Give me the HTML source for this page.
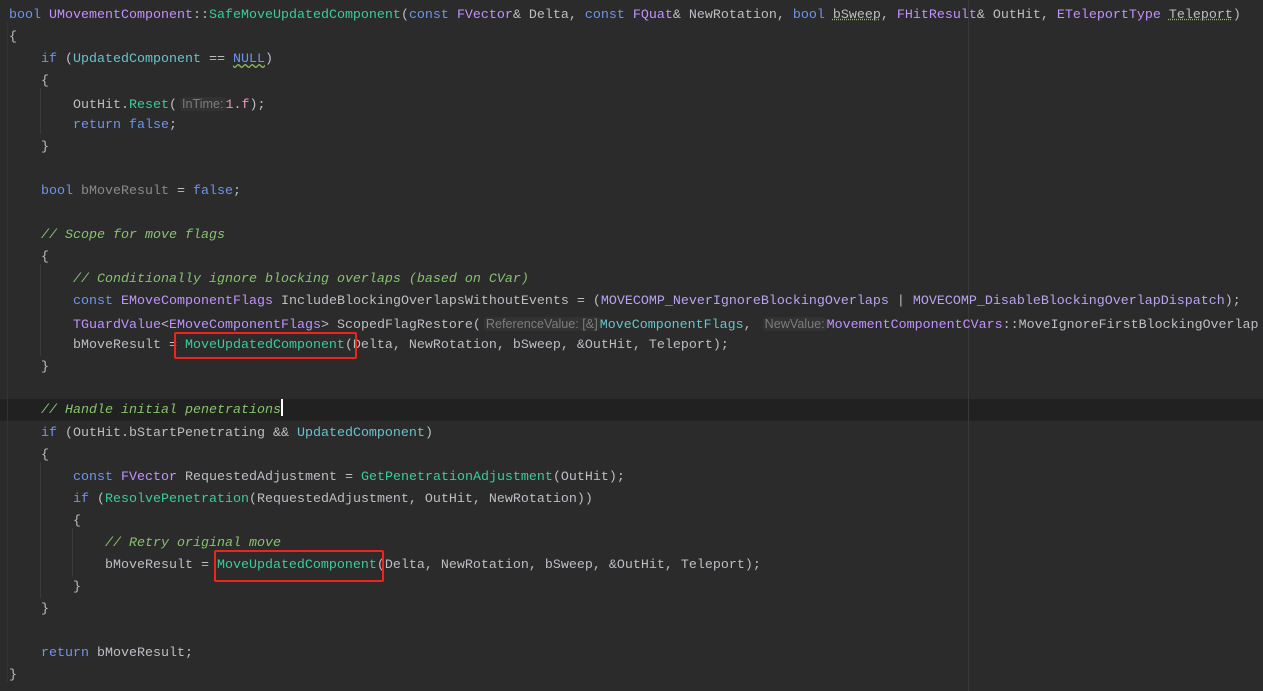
<!DOCTYPE html>
<html><head><meta charset="utf-8"><style>
body{margin:0;width:1263px;height:691px;background:#2b2b2b;overflow:hidden;position:relative;font-family:"Liberation Mono",monospace;font-size:13.33px;color:#bdbec4}
.l{position:absolute;left:9px;height:22px;line-height:22px;white-space:pre;margin-top:2px}
.k{color:#6c95eb}.t{color:#c191ff}.f{color:#39cc9b}.v{color:#66c3cc}.c{color:#85c46c;font-style:italic}.n{color:#ed94c0}.m{color:#b9a3f0}
.h{font-family:"Liberation Sans",sans-serif;font-size:12.6px;color:#7d7d7d;background:#323232;padding:0 2px;margin-left:3px;border-radius:3px}
.g{position:absolute;width:1px;background:#3b3b3b}
.box{position:absolute;border:2px solid #f0241c;border-radius:2px}
.u{text-decoration:underline dotted #8bbf5c}
.w{text-decoration:underline wavy #8bbf5c}
</style></head><body>
<div style="position:absolute;left:0;top:399px;width:1263px;height:22px;background:#212121"></div>
<div class="g" style="left:968px;top:0;height:691px;background:#393939"></div>
<div class="g" style="left:40px;top:88px;height:46px"></div>
<div class="g" style="left:40px;top:264px;height:92px"></div>
<div class="g" style="left:40px;top:462px;height:136px"></div>
<div class="g" style="left:72px;top:528px;height:48px"></div>
<div class="g" style="left:7px;top:22px;height:660px;background:#333"></div>
<div class="l" style="top:3px"><span class="k">bool</span> <span class="t">UMovementComponent</span>::<span class="f">SafeMoveUpdatedComponent</span>(<span class="k">const</span> <span class="t">FVector</span>&amp; Delta, <span class="k">const</span> <span class="t">FQuat</span>&amp; NewRotation, <span class="k">bool</span> <span class="u">bSweep</span>, <span class="t">FHitResult</span>&amp; OutHit, <span class="t">ETeleportType</span> <span class="u">Teleport</span>)</div>
<div class="l" style="top:25px">{</div>
<div class="l" style="top:47px">    <span class="k">if</span> (<span class="v">UpdatedComponent</span> == <span class="k w">NULL</span>)</div>
<div class="l" style="top:69px">    {</div>
<div class="l" style="top:91px">        OutHit.<span class="f">Reset</span>(<span class="h">InTime:</span><span class="n">1.f</span>);</div>
<div class="l" style="top:113px">        <span class="k">return false</span>;</div>
<div class="l" style="top:135px">    }</div>
<div class="l" style="top:179px">    <span class="k">bool</span> <span style="color:#8a8a8a">bMoveResult</span> = <span class="k">false</span>;</div>
<div class="l" style="top:223px">    <span class="c">// Scope for move flags</span></div>
<div class="l" style="top:245px">    {</div>
<div class="l" style="top:267px">        <span class="c">// Conditionally ignore blocking overlaps (based on CVar)</span></div>
<div class="l" style="top:289px">        <span class="k">const</span> <span class="t">EMoveComponentFlags</span> IncludeBlockingOverlapsWithoutEvents = (<span class="m">MOVECOMP_NeverIgnoreBlockingOverlaps</span> | <span class="m">MOVECOMP_DisableBlockingOverlapDispatch</span>);</div>
<div class="l" style="top:311px">        <span class="t">TGuardValue</span>&lt;<span class="t">EMoveComponentFlags</span>&gt; ScopedFlagRestore(<span class="h">ReferenceValue: [&amp;]</span><span class="v">MoveComponentFlags</span>, <span class="h">NewValue:</span><span class="t">MovementComponentCVars</span>::MoveIgnoreFirstBlockingOverlap</div>
<div class="l" style="top:333px">        bMoveResult = <span class="f">MoveUpdatedComponent</span>(Delta, NewRotation, bSweep, &amp;OutHit, Teleport);</div>
<div class="l" style="top:355px">    }</div>
<div class="l" style="top:397px">    <span class="c">// Handle initial penetrations</span><span style="display:inline-block;width:2px;height:17px;background:#fff;vertical-align:-3px"></span></div>
<div class="l" style="top:421px">    <span class="k">if</span> (OutHit.bStartPenetrating &amp;&amp; <span class="v">UpdatedComponent</span>)</div>
<div class="l" style="top:443px">    {</div>
<div class="l" style="top:465px">        <span class="k">const</span> <span class="t">FVector</span> RequestedAdjustment = <span class="f">GetPenetrationAdjustment</span>(OutHit);</div>
<div class="l" style="top:487px">        <span class="k">if</span> (<span class="f">ResolvePenetration</span>(RequestedAdjustment, OutHit, NewRotation))</div>
<div class="l" style="top:509px">        {</div>
<div class="l" style="top:531px">            <span class="c">// Retry original move</span></div>
<div class="l" style="top:553px">            bMoveResult = <span class="f">MoveUpdatedComponent</span>(Delta, NewRotation, bSweep, &amp;OutHit, Teleport);</div>
<div class="l" style="top:575px">        }</div>
<div class="l" style="top:597px">    }</div>
<div class="l" style="top:641px">    <span class="k">return</span> bMoveResult;</div>
<div class="l" style="top:663px">}</div>
<div class="box" style="left:174px;top:332px;width:179px;height:23px"></div>
<div class="box" style="left:214px;top:550px;width:166px;height:28px"></div>
</body></html>
